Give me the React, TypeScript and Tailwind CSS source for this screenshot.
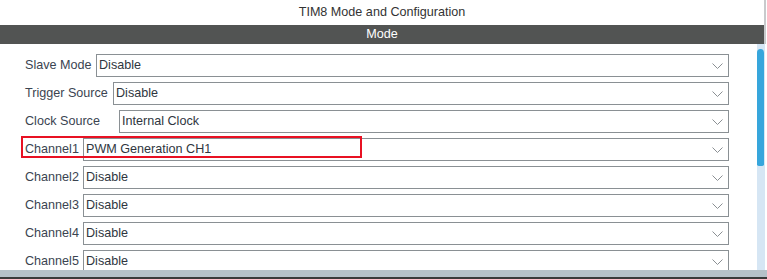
import React from 'react';

type Row = { label: string; value: string; labelWidth: string };

const rows: Row[] = [
    { label: 'Slave Mode', value: 'Disable', labelWidth: 'w-[71px]' },
    { label: 'Trigger Source', value: 'Disable', labelWidth: 'w-[88px]' },
    { label: 'Clock Source', value: 'Internal Clock', labelWidth: 'w-[94px]' },
    { label: 'Channel1', value: 'PWM Generation CH1', labelWidth: 'w-[58px]' },
    { label: 'Channel2', value: 'Disable', labelWidth: 'w-[58px]' },
    { label: 'Channel3', value: 'Disable', labelWidth: 'w-[58px]' },
    { label: 'Channel4', value: 'Disable', labelWidth: 'w-[58px]' },
    { label: 'Channel5', value: 'Disable', labelWidth: 'w-[58px]' },
];

function Chevron() {
    return (
        <svg width="11" height="6" viewBox="0 0 11 6" className="shrink-0">
            <path d="M0.5 0.5 L5.5 5.5 L10.5 0.5" fill="none" stroke="#8a8f93" strokeWidth="1" />
        </svg>
    );
}

function SelectRow({ row }: { row: Row }) {
    return (
        <div className="flex h-[23px] shrink-0 items-center">
            <span className={`${row.labelWidth} shrink-0 whitespace-nowrap text-[#3b4451]`}>{row.label}</span>
            <div className="flex h-full flex-1 items-center border border-[#8a9094] bg-white pl-[2px] pr-[5px]">
                <span className="flex-1 whitespace-nowrap text-[#2f3640]">{row.value}</span>
                <Chevron />
            </div>
        </div>
    );
}

export default function App() {
    return (
        <div className="flex h-[279px] w-[767px] flex-col overflow-hidden bg-white font-['Liberation_Sans',Arial,sans-serif] text-[12.6px]">
            <div className="flex h-[25px] shrink-0">
                <div className="flex flex-1 items-center justify-center text-[#333]">
                    TIM8 Mode and Configuration
                </div>
                <div className="w-[2px] bg-[#c8cacc]" />
                <div className="w-[1px]" />
            </div>
            <div className="flex h-[19px] shrink-0">
                <div className="flex flex-1 items-center justify-center bg-[#525453] text-white">Mode</div>
                <div className="w-[2px] bg-[#c8cacc]" />
                <div className="w-[1px]" />
            </div>
            <div className="flex min-h-0 flex-1">
                <div className="relative flex flex-1 flex-col gap-[5px] overflow-hidden pl-[25px] pr-[28px] pt-[10px]">
                    {rows.map((row) => (
                        <SelectRow key={row.label} row={row} />
                    ))}
                    <div className="absolute left-[21px] top-[92px] h-[22px] w-[341px] border-2 border-[#e81123]" />
                </div>
                <div className="w-[8px] shrink-0 bg-[#d6e6f4] pt-[5px]">
                    <div className="h-[117px] w-[7px] rounded-t-[4px] rounded-b-[2px] bg-[#37a6dc]" />
                </div>
                <div className="w-[2px] shrink-0" />
            </div>
            <div className="h-[7px] shrink-0 bg-[#b6c1c8]" />
            <div className="h-[2px] shrink-0 bg-[#3a3a3a]" />
        </div>
    );
}
